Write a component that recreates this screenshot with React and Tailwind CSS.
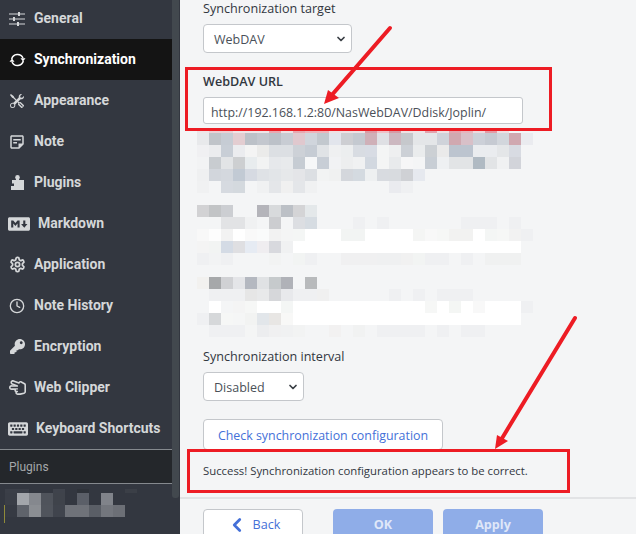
import { FaKey, FaKeyboard, FaMarkdown, FaRegHandScissors } from 'react-icons/fa'
import { FiClock } from 'react-icons/fi'
import { LuChevronDown, LuChevronLeft, LuSettings } from 'react-icons/lu'
import { MdOutlineStickyNote2 } from 'react-icons/md'
import { BsTools } from 'react-icons/bs'

function SlidersIcon() {
  return (
    <svg width="16" height="14" viewBox="0 0 16 14" fill="currentColor">
      <rect x="0" y="1.5" width="16" height="1" />
      <rect x="9" y="0" width="2" height="4" />
      <rect x="0" y="6.5" width="16" height="1" />
      <rect x="4" y="5" width="2" height="4" />
      <rect x="0" y="11.5" width="16" height="1" />
      <rect x="8" y="10" width="2" height="4" />
    </svg>
  )
}

function SyncIcon() {
  return (
    <svg width="17" height="16" viewBox="0 0 16 16" fill="none" stroke="currentColor" strokeWidth="1.5">
      <path d="M2.2 7 A6 6 0 0 1 13.5 6" />
      <path d="M13.8 9 A6 6 0 0 1 2.5 10" />
      <path d="M11 6.2 L16 6.2 L13.5 9.5 Z" fill="currentColor" stroke="none" />
      <path d="M0 9.8 L5 9.8 L2.5 6.5 Z" fill="currentColor" stroke="none" />
    </svg>
  )
}

function PuzzleIcon() {
  return (
    <svg width="13" height="15" viewBox="0 0 13 15" fill="currentColor">
      <circle cx="6.5" cy="2.4" r="2.3" />
      <path d="M5 3 H8 V5 H13 V15 H0 V11 H3 V8.5 H1 V5 H5 Z" />
    </svg>
  )
}

const items = [
  { label: 'General', icon: <SlidersIcon />, left: 'w-[34px]' },
  { label: 'Synchronization', icon: <SyncIcon />, left: 'w-[34px]', active: true },
  { label: 'Appearance', icon: <BsTools size={14} />, left: 'w-[34px]' },
  { label: 'Note', icon: <MdOutlineStickyNote2 size={18} />, left: 'w-[34px]' },
  { label: 'Plugins', icon: <PuzzleIcon />, left: 'w-[34px]' },
  { label: 'Markdown', icon: <FaMarkdown size={22} />, left: 'w-[38px]' },
  { label: 'Application', icon: <LuSettings size={17} strokeWidth={2.5} />, left: 'w-[34px]' },
  { label: 'Note History', icon: <FiClock size={16} />, left: 'w-[34px]' },
  { label: 'Encryption', icon: <FaKey size={15} />, left: 'w-[34px]' },
  { label: 'Web Clipper', icon: <FaRegHandScissors size={17} />, left: 'w-[34px]' },
  { label: 'Keyboard Shortcuts', icon: <FaKeyboard size={20} />, left: 'w-[36px]' },
]

const bg = '#f4f5f6'
const w = '#ffffff'
const f = '#eff0f2'

const blurTop = [
  ['#f0e4e6', '#ecd0d4', '#ecd0d4', '#f0e4e6', '#f0e4e6', '#f0e4e6', '#eaa8b0', '#f0e0e2', '#e8a8b0', '#eeb4ba', '#eeb4ba', '#f0e0e2', '#f0e0e2', '#f0e0e2', '#dc9ca6', '#f0c0c6', '#d89aa4', '#f0e0e2', '#f0e4e6', '#e4a4ae', '#f0e0e2', '#e4a4ae', '#e8b4bc', '#f0d8dc', '#e49ca6', '#f0dfe2', bg, bg],
  ['#e8e9eb', '#c0c4c9', '#c6ccd4', '#e3cdd1', '#bcc1c8', '#c3c7ce', '#bcc1c8', '#c8ccd3', '#e0c8ce', '#d0d5dc', '#c2c8ce', '#e2e5ec', '#cdced2', '#c4c9d0', '#cfb0b8', '#dfe0e4', '#ccb8c0', '#c6c8cc', '#e4e6e8', '#e4e6e8', '#cfd3da', '#d0a8b0', '#d8c0c8', '#ccd0d8', '#c6cad2', '#d2d6dc', '#d0a8b0', '#eaebef'],
  ['#f0f0f2', '#ebecee', '#c8ced6', '#ebecef', '#f4f4f4', '#ebebea', '#dcdfe3', '#dcdfe3', '#cdd1d7', '#c6ccd4', '#e0e3e6', '#eff0f1', '#eceeef', '#d8dce2', '#d8dce4', '#f4f5f5', '#eeeff0', '#ccd0d6', '#eaeced', '#ccd0d4', '#eaeaea', '#bcc4cf', '#bcc4cf', '#eaecef', '#eaecef', '#e4e6e8', '#d8dbe2', bg],
  ['#f2f3f4', '#c8ccd0', '#e2e4e6', '#cdcfd1', '#e8ecee', '#f2f3f3', '#e6e8eb', '#e8eaec', '#c6ccd3', '#f6f7f8', '#c8ced6', '#f1f2f4', '#edeeef', '#f0f1f2', '#d2d8e0', '#f4f5f5', '#e8eaec', '#f6f6f7', bg, '#c8ced5', '#eef0f2', '#e2e4e6', '#e2e4e6', '#b0bac3', '#e2e4e6', '#f0f1f2', '#d2d4da', bg],
  ['#eff0f1', '#d2d6dc', '#d4d8de', '#c2cad4', '#d6dae2', '#dfe2e6', '#e2e5e8', '#e6e8ea', '#e4e5e8', '#dcdfe3', '#f2f3f3', '#f0f1f1', '#d4d7dc', '#d4dae0', '#eef0f1', '#d8dbe0', '#d8dbdf', '#cfd1d5', '#e6e9ef'],
  ['#f0f1f2', bg, '#d6dae0', '#d4d9de', bg, '#f0f1f2', '#e4e6e9', '#f0f0f0', '#e4e6e9', '#f0f1f2', bg, bg, bg, bg, bg, bg, '#eaebef', f],
]

const blurMiddle = [
  ['#d2d2d4', '#c2c4c6', '#ccced2', bg, bg, '#b4b4ba', '#d8dadc', '#bcc0c6', '#d4d4d6', '#e4e8ea'],
  [bg, bg, '#e2e3e5', '#e2e3e5', '#f0f1f2', bg, '#cccdd0', bg, '#dcdee2', '#d6dce2', bg, bg, bg, f, bg, f, bg, bg, bg, bg, bg, bg, f, f, f, bg, f],
  ['#f8f8f8', '#fdfdfd', '#f2f2f2', w, '#f9f9f9', '#fafbfb', '#f2f2f2', '#f4f5f5', '#f4f6f5', w, w, w, '#f2f4f3', '#f2f4f3', w, w, w, w, '#f4f5f4', '#f8f8f8', '#f6f7f6', '#f2f2f1', '#f2f2f1', w, '#f4f6f5', '#f6f7f6', '#f2f2f2', f],
  ['#f4f4f4', '#f2f4f3', '#d4dbe5', '#dfdfe2', '#e6ebf3', '#efedf0', '#d8d9de', '#f0f1f2', w, w, w, w, w, w, w, w, w, w, w, w, w, w, w, w, w, w, w],
  [f, '#f2f3f4', f, bg, bg, bg, '#f2f3f3', bg, '#f2f4f3', f, bg, bg, '#f0f0f1', '#f0f0f1', '#f0f0f1', '#eff0f1', '#eff0f1', '#f1f1f1', '#f2f4f3', f, f, bg, f, bg, '#f0f1f1', '#f0f1f1', '#f0f1f1'],
]

const blurBottom = [
  ['#f2f1ef', '#a6a8aa', '#d0d1d4', '#e4e5e8', '#b4b8c0', '#e0e2e4', '#c6cacc', '#b0b2b8', bg, '#b8babc'],
  [bg, f, f, f, '#e6e6e6', '#e8e9ea', '#d6d7da', '#e8e9ec', f, f, '#f0f0f0', bg, bg, bg, bg, bg, f, bg, f, bg, f, f, f],
  [bg, w, bg, '#f4f4f4', '#f6f7f6', w, w, '#f4f6f5', w, w, w, w, w, w, w, w, w, w, w, '#f6f7f6', w, '#f4f6f4', w, '#f8f8f8', w, w, w, f],
  [f, '#d6d8da', '#f6f7f6', '#f5f6f6', '#f2f3f2', '#e2e6ea', '#e8e6e4', '#f8f8f7', w, w, w, w, w, w, w, w, w, w, w, w, w, w, w, w, w, w, w],
  [bg, f, f, f, '#f4f5f5', '#ecedef', '#f0f0f1', '#f0f1f2', '#f2f3f3', bg, bg, '#f2f1f1', bg, '#f1f2f2', bg, f, f, f, f, bg, f, bg, f, f],
]

const blurSidebar = [
  ['#3b3f48', '#3b3f48', '#333740', '#333740', '#3f434c', '#333740', '#2f333a', '#333740', '#333740', '#333740', '#3b3f47'],
  ['#3a3e47', '#a3a6ab', '#85888e', '#4f535b', '#3f434b', '#333740', '#5b5f68', '#333740', '#80838a'],
  ['#363a43', '#5f636b', '#8b8e93', '#50545c', '#40444d', '#6f7279', '#6f7279', '#5a5e66', '#73767d', '#6c6f76'],
]

// first row of each blurred block is cut short in the screenshot
function Mosaic({ rows, cutFirst }) {
  return (
    <div className="flex flex-col">
      {rows.map((row, i) => (
        <div key={i} className={`flex ${cutFirst && i === 0 ? 'h-1' : 'h-3'}`}>
          {row.map((color, j) => (
            <div key={j} className="w-3 h-full" style={{ backgroundColor: color }} />
          ))}
        </div>
      ))}
    </div>
  )
}

function Select({ value, className }) {
  return (
    <div className={`flex items-center justify-between bg-white border border-[#c4c7cb] rounded-[4px] text-[12.5px] text-[#4a5058] ${className}`}>
      <span className="pt-[3px]">{value}</span>
      <LuChevronDown size={12} strokeWidth={3.5} className="text-[#3a3f45]" />
    </div>
  )
}

export default function App() {
  return (
    <div className="relative w-[636px] h-[534px] overflow-hidden flex bg-[#f4f5f6]">
      {/* Sidebar */}
      <div className="w-[180px] h-full shrink-0 flex bg-[#333740]" style={{ fontFamily: 'Roboto, sans-serif' }}>
        <div className="w-[172px] -mt-[2px] shrink-0">
          {items.map((item) => (
            <div
              key={item.label}
              className={`h-[41px] flex items-center text-[14px] font-bold ${item.active ? 'bg-[#141414] text-white' : 'text-[#d5d7d9]'}`}
            >
              <div className={`${item.left} shrink-0 flex justify-center pl-1 pr-1`}>{item.icon}</div>
              <span>{item.label}</span>
            </div>
          ))}
          <div className="h-[35px] flex items-center pl-[9px] bg-[#24272b] border-y border-[#85898e] text-[12px] text-[#a4a7aa]">
            Plugins
          </div>
          <div className="relative pt-[5px] pl-[5px]">
            <Mosaic rows={blurSidebar} cutFirst />
            <div className="absolute left-1 top-[21px] w-px h-[18px] bg-[#8f8a3a]" />
          </div>
        </div>
        <div className="w-[7px] h-[498px] rounded-b-[3px] bg-[#42484e]" />
      </div>

      {/* Main content */}
      <div className="flex-1 flex flex-col min-w-0 text-[#32373f]" style={{ fontFamily: '"Open Sans", sans-serif' }}>
        <div className="h-[497px] shrink-0 pl-[23px] overflow-hidden">
          <div className="text-[12.6px] leading-4 pt-px">Synchronization target</div>
          <Select value="WebDAV" className="mt-[7px] w-[149px] h-[29px] pl-[10px] pr-[4px]" />
          <div className="text-[12.6px] leading-4 font-semibold mt-[20px] pt-px">WebDAV URL</div>
          <input
            readOnly
            value="http://192.168.1.2:80/NasWebDAV/Ddisk/Joplin/"
            className="mt-[7px] block w-[320px] h-[27px] px-[7px] pt-[3px] bg-white border border-[#c4c7cb] rounded-[3px] text-[12.4px] text-[#4a5058]"
          />
          <div className="-ml-[6px] mt-[5px]">
            <Mosaic rows={blurTop} cutFirst />
          </div>
          <div className="-ml-[6px] mt-[12px]">
            <Mosaic rows={blurMiddle} />
          </div>
          <div className="-ml-[6px] mt-[12px]">
            <Mosaic rows={blurBottom} />
          </div>
          <div className="text-[12.6px] leading-4 mt-[11px] pt-px">Synchronization interval</div>
          <Select value="Disabled" className="mt-[7px] w-[101px] h-[29px] pl-[10px] pr-[4px]" />
          <button className="mt-[18px] block w-[240px] h-[31px] pt-[3px] bg-white border border-[#c4c7cb] rounded-[4px] text-[12.4px] text-[#4470d8]">
            Check synchronization configuration
          </button>
          <div className="text-[11.35px] leading-4 mt-[13px]">Success! Synchronization configuration appears to be correct.</div>
        </div>

        {/* Footer */}
        <div className="flex-1 border-t-2 border-[#e2e3e5] pl-[23px] pt-[10px] flex gap-[10px]">
          <button className="w-[100px] h-[36px] mr-5 flex items-center justify-center gap-[5px] pb-1 bg-white border border-[#c4c7cb] rounded-[4px] text-[12.6px] text-[#4470d8]">
            <LuChevronLeft size={22} strokeWidth={3} />
            Back
          </button>
          <button className="w-[100px] h-[36px] pb-1 bg-[#8fade8] rounded-[4px] text-[12.6px] font-bold text-[#dfe7f8]">OK</button>
          <button className="w-[100px] h-[36px] pb-1 bg-[#8fade8] rounded-[4px] text-[12.6px] font-bold text-[#dfe7f8]">Apply</button>
        </div>
      </div>

      {/* Red annotations */}
      <div className="absolute left-[185px] top-[67px] w-[367px] h-[64px] border-[3px] border-[#ed1c24]" />
      <div className="absolute left-[187px] top-[449px] w-[383px] h-[44px] border-[3px] border-[#ed1c24]" />
      <svg className="absolute inset-0" width="636" height="534" viewBox="0 0 636 534">
        <path d="M390 28 L331 96" stroke="#ed1c24" strokeWidth="4" strokeLinecap="round" fill="none" />
        <path d="M324 104 L339 98 L328 90 Z" fill="#ed1c24" />
        <path d="M575 318 L501 440" stroke="#ed1c24" strokeWidth="4" strokeLinecap="round" fill="none" />
        <path d="M495 449 L508 441 L497 435 Z" fill="#ed1c24" />
      </svg>
    </div>
  )
}
